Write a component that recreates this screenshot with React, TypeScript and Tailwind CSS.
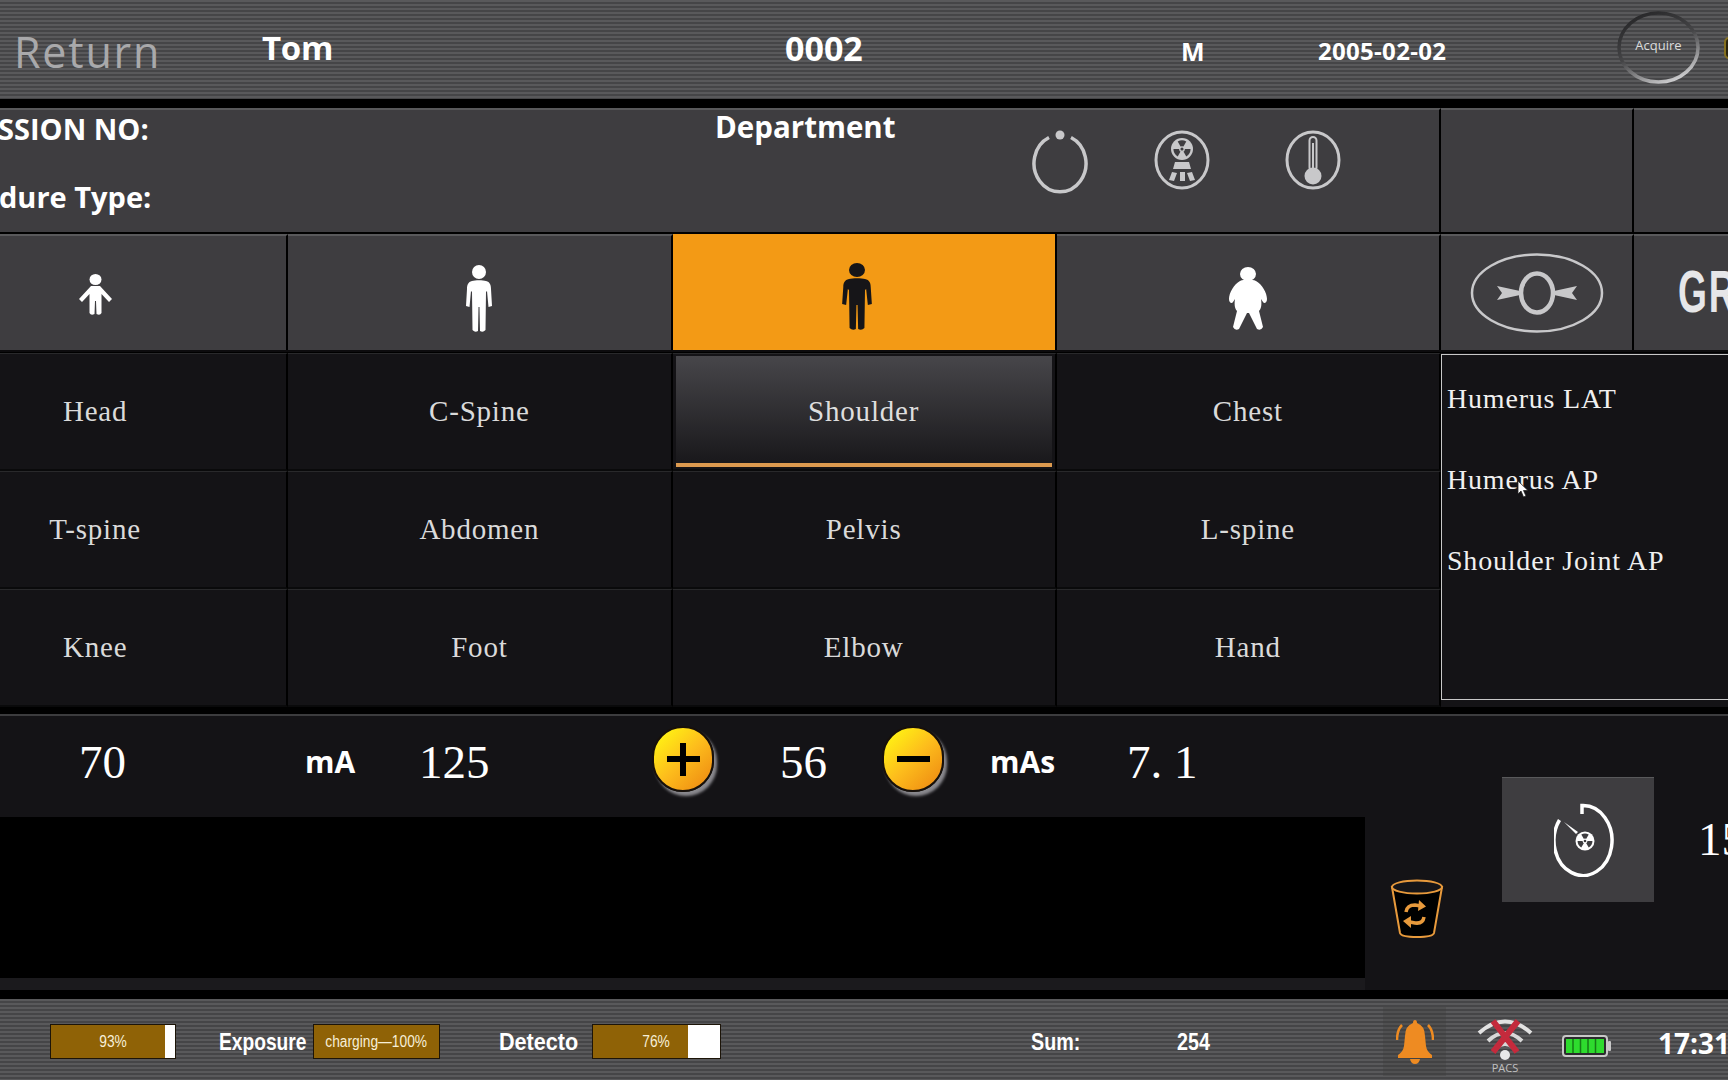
const sector = (cx: number, cy: number, r: number, a: number) => {
  const p = (d: number) => {
    const t = ((d - 90) * Math.PI) / 180;
    return `${(cx + r * Math.cos(t)).toFixed(2)} ${(cy + r * Math.sin(t)).toFixed(2)}`;
  };
  return `M${cx} ${cy} L${p(a - 30)} A${r} ${r} 0 0 1 ${p(a + 30)} Z`;
};

const Trefoil = ({ cx, cy, r, fill, ink }: { cx: number; cy: number; r: number; fill: string; ink: string }) => (
  <g>
    <circle cx={cx} cy={cy} r={r} fill={fill} />
    {[0, 120, 240].map((a) => (
      <path key={a} d={sector(cx, cy, r * 0.78, a)} fill={ink} />
    ))}
    <circle cx={cx} cy={cy} r={r * 0.26} fill={fill} />
    <circle cx={cx} cy={cy} r={r * 0.14} fill={ink} />
  </g>
);

const AdultIcon = ({ color, width = 28 }: { color: string; width?: number }) => (
  <svg width={width} height="67" viewBox="0 0 28 67" fill={color} preserveAspectRatio="none">
    <ellipse cx="14" cy="7" rx="7" ry="7" />
    <path d="M7 16C10 15 18 15 21 16C25 17 26 20 26 24L27 41L23.5 42L22 26L21 27L20.5 65Q18 68 15 66L14.5 42L13.5 42L13 66Q10 68 7.5 65L7 27L6 26L4.5 42L1 41L2 24C2 20 3 17 7 16Z" />
  </svg>
);

const ChildIcon = () => (
  <svg width="35" height="41" viewBox="0 0 35 41" fill="white">
    <ellipse cx="17.5" cy="5.5" rx="6" ry="5.5" />
    <path d="M13 12L22 12L34 25L31 28L23.500 20L23.500 39Q22 42 18.5 40L18 27L17 27L16.5 40Q13 42 11.500 39L11.500 20L4 28L1 25Z" />
  </svg>
);

const LargeIcon = () => (
  <svg width="40" height="63" viewBox="0 0 40 63" fill="white">
    <ellipse cx="20" cy="7" rx="8" ry="7" />
    <path d="M12 14C16 12 24 12 28 14C34 17 39 26 39 32C39 36 36 37 35 35L33 32C34 38 33 42 31 44L35 60Q33 64 29 62L21 46L19 46L11 62Q7 64 5 60L9 44C7 42 6 38 7 32L5 35C4 37 1 36 1 32C1 26 6 17 12 14Z" />
  </svg>
);

const ReadyIcon = () => (
  <svg width="56" height="64" viewBox="0 0 56 64" fill="none" stroke="#c8c8ca" strokeWidth="3.500">
    <path d="M17 7.500A26 28.500 0 1 0 39 7.500" />
    <circle cx="28" cy="5" r="4.5" fill="#c8c8ca" stroke="none" />
  </svg>
);

const TubeIcon = () => (
  <svg width="56" height="60" viewBox="0 0 56 60" fill="none">
    <ellipse cx="28" cy="30" rx="26" ry="28" stroke="#c8c8ca" strokeWidth="3" />
    <Trefoil cx={28} cy={19} r={11} fill="#c8c8ca" ink="#3e3d40" />
    <path d="M19 39L37 39L35 32L21 32Z" fill="#c8c8ca" />
    <path d="M18 42L23 43L20 51L15 50Z M26 42L31 42L31 51L26 51Z M33 43L38 42L41 50L36 51Z" fill="#c8c8ca" />
  </svg>
);

const TempIcon = () => (
  <svg width="56" height="60" viewBox="0 0 56 60" fill="none">
    <ellipse cx="28" cy="30" rx="26" ry="28" stroke="#c8c8ca" strokeWidth="3" />
    <rect x="24.5" y="7" width="7" height="34" rx="3.5" stroke="#c8c8ca" strokeWidth="2" />
    <rect x="27" y="13" width="2" height="28" fill="#c8c8ca" />
    <circle cx="28" cy="46" r="8.5" fill="#c8c8ca" />
  </svg>
);

const CompressIcon = () => (
  <svg width="134" height="80" viewBox="0 0 134 80" fill="none" stroke="#c8c8ca">
    <ellipse cx="67" cy="40" rx="65" ry="38.5" strokeWidth="2.5" />
    <ellipse cx="67" cy="40" rx="16" ry="19.5" strokeWidth="4.5" />
    <path d="M27 33L50 38L50 42L27 47L32 40Z M107 33L84 38L84 42L107 47L102 40Z" fill="#c8c8ca" stroke="none" />
  </svg>
);

const ExposureIcon = () => (
  <svg width="62" height="74" viewBox="0 0 62 74" fill="none">
    <path d="M28 11L28 2.5A29 35 0 1 1 5.5 17" stroke="white" strokeWidth="3.500" />
    <path d="M10 19L24 29L22 31Z" fill="white" />
    <Trefoil cx={31} cy={38} r={9.5} fill="white" ink="#3e3d40" />
  </svg>
);

const TrashIcon = () => (
  <svg width="54" height="60" viewBox="0 0 54 60" fill="none" stroke="#e89a3c">
    <path d="M2 8L10 54Q11 58 27 58Q43 58 44 54L52 8Z" fill="black" strokeWidth="2" />
    <ellipse cx="27" cy="8" rx="25" ry="6.5" fill="#161518" strokeWidth="2" />
    <path d="M16 33Q17 26 25 26L31 27M34 38Q33 45 25 44L20 43" strokeWidth="3.500" />
    <path d="M29 21L36 27.500L28 32Z M21 37L13 42L21 49Z" fill="#e89a3c" stroke="none" />
  </svg>
);

const BellIcon = () => (
  <svg width="38" height="44" viewBox="0 0 38 44" fill="#ee8b22">
    <path d="M19 0Q21 0 21 3Q29 6 29 16L30 26Q31 32 36 35L36 38L2 38L2 35Q7 32 8 26L9 16Q9 6 17 3Q17 0 19 0Z" />
    <path d="M14 39L24 39Q23 44 19 44Q15 44 14 39Z" />
    <path d="M6 5Q1 10 1 20M32 5Q37 10 37 20" fill="none" stroke="#ee8b22" strokeWidth="2.5" />
  </svg>
);

const PacsIcon = () => (
  <svg width="56" height="46" viewBox="0 0 56 46" fill="none">
    <path d="M2 17Q28 -6 54 17" stroke="#e2e2e2" strokeWidth="4" />
    <path d="M11 25Q28 9 45 25" stroke="#d8d8d8" strokeWidth="4" />
    <path d="M19 32Q28 24 37 32" stroke="#d8d8d8" strokeWidth="4" />
    <circle cx="28" cy="39" r="5" fill="#e8e8e8" />
    <path d="M16 5L40 36M41 5L16 36" stroke="#c42a3c" strokeWidth="6" />
  </svg>
);

const BatteryIcon = () => (
  <svg width="49" height="22" viewBox="0 0 49 22">
    <rect x="1" y="1" width="44" height="20" rx="3" fill="#2b2b2d" stroke="#c8c8c8" strokeWidth="2" />
    <rect x="46" y="6" width="3" height="10" rx="1" fill="#c8c8c8" />
    <rect x="4" y="4" width="38" height="14" fill="#2edb2e" />
    <path d="M11 4V18M18.500 4V18M26 4V18M33.500 4V18" stroke="#167a16" strokeWidth="1.500" />
  </svg>
);

const AcquireRing = () => (
  <svg className="absolute inset-0" width="83" height="73" viewBox="0 0 83 73" fill="none">
    <defs>
      <linearGradient id="ringStroke" x1="0.2" y1="0" x2="0.7" y2="1">
        <stop offset="0" stopColor="#262628" />
        <stop offset="0.5" stopColor="#454547" />
        <stop offset="1" stopColor="#d0d0d2" />
      </linearGradient>
    </defs>
    <ellipse cx="41.500" cy="36.500" rx="39.500" ry="34.500" stroke="url(#ringStroke)" strokeWidth="3.500" />
  </svg>
);

const MODES = [
  { key: 'child', icon: <ChildIcon />, offset: 'pt-[2px]' },
  { key: 'adult', icon: <AdultIcon color="white" />, offset: 'pt-[10px]' },
  { key: 'adult-active', icon: <AdultIcon color="#161518" width={32} />, offset: 'pt-[9px] pr-[14px]', active: true },
  { key: 'large', icon: <LargeIcon />, offset: 'pt-[10px]' },
];

const BODY_PARTS = ['Head', 'C-Spine', 'Shoulder', 'Chest', 'T-spine', 'Abdomen', 'Pelvis', 'L-spine', 'Knee', 'Foot', 'Elbow', 'Hand'];
const VIEWS = ['Humerus LAT', 'Humerus AP', 'Shoulder Joint AP'];

const stripes = 'bg-[repeating-linear-gradient(180deg,#59595b_0px,#59595b_2px,#454547_2px,#454547_4px)]';
const bold = "font-['Open_Sans',sans-serif] font-bold text-white";
const condensed = "block origin-left font-['Liberation_Sans',sans-serif] text-[24px] font-bold whitespace-nowrap text-white";
const value = "font-['Liberation_Serif',serif] text-[47px] leading-none text-white";

const Gauge = ({ label, width, fill }: { label: string; width: string; fill: string }) => (
  <div className={`flex h-[35px] shrink-0 items-center justify-center border border-[#1c1408] ${width} ${fill}`}>
    <span className="scale-x-[0.86] font-['Liberation_Sans',sans-serif] text-[16px] whitespace-nowrap text-[#f7efd8]">{label}</span>
  </div>
);

const RoundButton = ({ plus }: { plus?: boolean }) => (
  <button className="relative flex h-[66px] w-[62px] shrink-0 items-center justify-center rounded-full border-2 border-[#17100a] bg-[linear-gradient(135deg,#fff214_10%,#fdbd1c_50%,#ee8a12_95%)] shadow-[3px_4px_3px_#8a898e]">
    <span className="h-[6px] w-[33px] bg-black" />
    {plus && <span className="absolute h-[33px] w-[6px] bg-black" />}
  </button>
);

export default function App() {
  return (
    <div className="relative flex h-[1080px] w-[1728px] flex-col overflow-hidden bg-black">
      <header className={`flex h-[99px] shrink-0 items-center pb-[4px] pl-[14px] ${stripes}`}>
        <span className="w-[248px] shrink-0 pt-[8px] font-['Open_Sans',sans-serif] text-[43px] leading-none tracking-[1.8px] text-[#a9a9ab]">Return</span>
        <span className={`w-[523px] shrink-0 text-[33px] leading-none tracking-[-0.3px] ${bold}`}>Tom</span>
        <span className={`w-[396px] shrink-0 text-[34px] leading-none ${bold}`}>0002</span>
        <span className={`w-[137px] shrink-0 pt-[7px] text-[25px] leading-none ${bold}`}>M</span>
        <span className={`w-[299px] shrink-0 pt-[7px] text-[24px] leading-none tracking-[0.3px] ${bold}`}>2005-02-02</span>
        <div className="relative flex h-[73px] w-[83px] shrink-0 items-center justify-center">
          <AcquireRing />
          <span className="pb-[4px] font-['Open_Sans',sans-serif] text-[13px] text-[#dcdcdc]">Acquire</span>
        </div>
        <span className="ml-[24px] h-[22px] w-[10px] shrink-0 rounded-full border-2 border-[#86701f] bg-[#2a2410]" />
      </header>

      <section className="mt-[9px] grid h-[126px] shrink-0 grid-cols-[1441px_193px_1fr] border-b-2 border-black bg-[#3e3d40]">
        <div className="flex border-t-2 border-r-2 border-t-[#59595b] border-r-black">
          <div className={`flex w-[715px] shrink-0 flex-col gap-[30px] text-[29px] leading-[38px] ${bold}`}>
            <span className="-ml-[2px]">SSION NO:</span>
            <span className="-ml-[1px]">dure Type:</span>
          </div>
          <span className={`w-[317px] shrink-0 text-[29.5px] leading-[34px] ${bold}`}>Department</span>
          <div className="flex items-start gap-[66px] pt-[20px]">
            <ReadyIcon />
            <TubeIcon />
            <div className="ml-[9px]"><TempIcon /></div>
          </div>
        </div>
        <div className="border-t-2 border-r-2 border-t-[#59595b] border-r-black" />
        <div className="border-t-2 border-t-[#59595b]" />
      </section>

      <section className="flex h-[118px] shrink-0 border-b-2 border-[#0c0b0d] bg-[#3e3d40]">
        <div className="-ml-[96px] grid w-[1537px] shrink-0 grid-cols-4">
          {MODES.map((m) => (
            <div
              key={m.key}
              className={`flex items-center justify-center border-r-2 border-black ${m.offset} ${m.active ? 'bg-[#f39a15]' : 'border-t-2 border-t-[#59595b]'}`}
            >
              {m.icon}
            </div>
          ))}
        </div>
        <div className="flex w-[193px] shrink-0 items-center justify-center border-t-2 border-r-2 border-t-[#59595b] border-r-black">
          <CompressIcon />
        </div>
        <div className="flex-1 overflow-hidden border-t-2 border-t-[#59595b] pt-[26px] pl-[44px]">
          <span className="block w-[100px] origin-left scale-x-[0.62] font-['Liberation_Sans',sans-serif] text-[60px] leading-none font-bold tracking-[3px] text-[#e6e6e8]">GR</span>
        </div>
      </section>

      <section className="flex h-[355px] shrink-0 border-t border-black bg-[#141316]">
        <div className="-ml-[96px] grid w-[1537px] shrink-0 grid-cols-4 grid-rows-3">
          {BODY_PARTS.map((part) => (
            <div key={part} className="flex items-stretch border-t border-r-2 border-b-2 border-t-[#29292b] border-r-black border-b-[#0a0a0b]">
              <div
                className={`flex flex-1 items-center justify-center font-['Liberation_Serif',serif] text-[29px] leading-none tracking-[0.8px] ${
                  part === 'Shoulder'
                    ? 'mx-[3px] mt-[2px] mb-[2px] border-b-[4px] border-[#dc9a4f] bg-[linear-gradient(180deg,#47464a,#19181b)] pt-[4px] text-[#dedede]'
                    : 'text-[#dadada]'
                }`}
              >
                {part}
              </div>
            </div>
          ))}
        </div>
        <div className="mt-[1px] mb-[7px] flex flex-1 flex-col border border-r-0 border-[#c8c8c8] pt-[25px] pl-[5px]">
          {VIEWS.map((v) => (
            <div key={v} className="flex h-[81px] items-start pt-[2px] font-['Liberation_Serif',serif] text-[28px] leading-[34px] tracking-[0.8px] text-[#f0f0f0]">
              {v}
            </div>
          ))}
        </div>
      </section>

      <section className="mt-[7px] flex h-[276px] shrink-0 border-t-2 border-[#3c3c3e] bg-[#141316]">
        <div className="flex w-[1365px] shrink-0 flex-col">
          <div className="flex h-[101px] shrink-0 items-center">
            <span className={`ml-[79px] w-[226px] shrink-0 pb-[8px] ${value}`}>70</span>
            <span className={`w-[114px] shrink-0 pb-[10px] text-[30px] leading-none ${bold}`}>mA</span>
            <span className={`w-[233px] shrink-0 pb-[8px] ${value}`}>125</span>
            <div className="-mt-[15px]"><RoundButton plus /></div>
            <span className={`ml-[66px] w-[102px] shrink-0 pb-[8px] ${value}`}>56</span>
            <div className="-mt-[15px]"><RoundButton /></div>
            <span className={`ml-[46px] w-[137px] shrink-0 pb-[10px] text-[30px] leading-none ${bold}`}>mAs</span>
            <span className={`shrink-0 pb-[8px] ${value}`}>7. 1</span>
          </div>
          <div className="h-[161px] shrink-0 bg-black" />
          <div className="h-[12px] shrink-0 bg-[#1b1a1d]" />
        </div>
        <div className="flex flex-1 items-start">
          <div className="mt-[163px] ml-[25px] shrink-0"><TrashIcon /></div>
          <div className="mt-[61px] ml-[58px] flex h-[125px] w-[152px] shrink-0 items-center justify-center border-t border-[#59595b] bg-[#3e3d40] pb-[1px] pl-[13px]">
            <ExposureIcon />
          </div>
          <span className={`mt-[100px] ml-[44px] shrink-0 ${value}`}>15</span>
        </div>
      </section>

      <footer className={`mt-[9px] flex h-[81px] shrink-0 items-center pt-[4px] pl-[50px] ${stripes}`}>
        <Gauge label="93%" width="w-[126px]" fill="bg-[linear-gradient(90deg,#8f6206_92%,#ffffff_92%)]" />
        <div className="ml-[43px] w-[94px] shrink-0"><span className={`scale-x-[0.8] ${condensed}`}>Exposure</span></div>
        <Gauge label="charging—100%" width="w-[127px]" fill="bg-[#8f6206]" />
        <div className="ml-[59px] w-[80px] shrink-0 overflow-hidden"><span className={`scale-x-[0.9] ${condensed}`}>Detector</span></div>
        <div className="ml-[13px]">
          <Gauge label="76%" width="w-[129px]" fill="bg-[linear-gradient(90deg,#8f6206_75%,#ffffff_75%)]" />
        </div>
        <div className="ml-[310px] w-[146px] shrink-0"><span className={`scale-x-[0.82] ${condensed}`}>Sum:</span></div>
        <div className="w-[206px] shrink-0"><span className={`scale-x-[0.82] ${condensed}`}>254</span></div>
        <div className="flex h-[69px] w-[63px] shrink-0 items-center justify-center bg-[#3a3a3c]/30">
          <BellIcon />
        </div>
        <div className="ml-[31px] flex w-[56px] shrink-0 flex-col items-center pt-[6px]">
          <PacsIcon />
          <span className="font-['Open_Sans',sans-serif] text-[11px] leading-[11px] text-[#c0c0c0]">PACS</span>
        </div>
        <div className="ml-[29px] shrink-0 pt-[8px]"><BatteryIcon /></div>
        <span className={`ml-[47px] shrink-0 pt-[2px] text-[28px] leading-none ${bold}`}>17:31</span>
      </footer>

      <svg className="absolute top-[480px] left-[1517px]" width="12" height="18" viewBox="0 0 12 18">
        <path d="M1 1L1 14L4 11L6.500 17L9 16L6.500 10.500L11 10.500Z" fill="white" stroke="#222" strokeWidth="0.8" />
      </svg>
    </div>
  );
}
